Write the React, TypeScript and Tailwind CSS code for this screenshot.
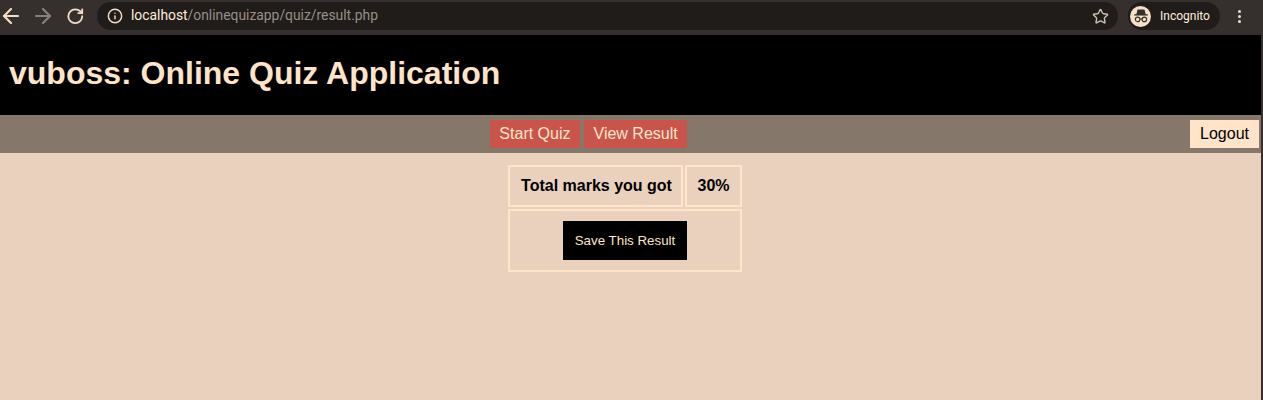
import { ArrowLeft, ArrowRight, RotateCw, Info, Star } from 'lucide-react';

function BrowserBar() {
  return (
    <div className="flex h-[35px] items-center bg-[#35302d] pb-[3px] font-['Roboto',sans-serif]">
      <ArrowLeft className="-ml-[1px] h-[24px] w-[24px] text-[#f3ddc9]" strokeWidth={2.2} />
      <ArrowRight className="ml-[8px] h-[24px] w-[24px] text-[#8a7f76]" strokeWidth={2.2} />
      <RotateCw className="ml-[11px] h-[18.5px] w-[18.5px] text-[#f3ddc9]" strokeWidth={2.4} />
      <div className="ml-[12.5px] flex h-[28px] w-[1021px] items-center rounded-full bg-[#1f1c1a] pl-[10px] pr-[9px]">
        <Info className="h-[16px] w-[16px] text-[#f3ddc9]" strokeWidth={2.2} />
        <div className="ml-[8px] flex-1 text-[13.85px] leading-none text-[#9a8f86]">
          <span className="text-[#fdeedd]">localhost</span>/onlinequizapp/quiz/result.php
        </div>
        <Star className="h-[17px] w-[17px] text-[#cdbdae]" strokeWidth={2} />
      </div>
      <div className="ml-[10px] flex h-[28px] w-[92px] items-center rounded-full bg-[#1f1c1a] pl-[2px]">
        <div className="flex h-[21px] w-[21px] items-center justify-center rounded-full bg-[#f7dfc8]">
          <svg viewBox="0 0 24 24" className="h-[18px] w-[18px]" fill="none" stroke="#35302d" strokeWidth="1.5">
            <path d="M8 4h8l1.5 6h-11z" fill="#35302d" />
            <path d="M3 10.5h18" strokeWidth="1.8" />
            <circle cx="7.5" cy="16.5" r="3" />
            <circle cx="16.5" cy="16.5" r="3" />
            <path d="M10.5 16h3" />
          </svg>
        </div>
        <span className="ml-[9px] text-[12px] text-[#fdeedd]">Incognito</span>
      </div>
      <div className="ml-[18px] flex flex-col gap-[2px]">
        <span className="h-[3px] w-[3px] rounded-full bg-[#f3ddc9]" />
        <span className="h-[3px] w-[3px] rounded-full bg-[#f3ddc9]" />
        <span className="h-[3px] w-[3px] rounded-full bg-[#f3ddc9]" />
      </div>
    </div>
  );
}

export default function App() {
  return (
    <div className="flex h-[400px] flex-col overflow-hidden border-r-2 border-[#35302d] bg-[#e9d1bd] font-['Liberation_Sans',Arial,sans-serif]">
      <BrowserBar />
      <header className="flex h-[80px] items-center bg-black pb-[4px] pl-[9px]">
        <h1 className="text-[32px] font-bold text-[#ffe4c9]">vuboss: Online Quiz Application</h1>
      </header>
      <nav className="flex h-[38px] items-center bg-[#857769] pr-[2px]">
        <div className="flex flex-1 justify-center gap-[4px] pr-[1px]">
          <a className="bg-[#c8544b] px-[9px] py-[5px] text-[16px] leading-[18px] text-[#ffe4c9]">Start Quiz</a>
          <a className="bg-[#c8544b] pl-[10px] pr-[9px] py-[5px] text-[16px] leading-[18px] text-[#ffe4c9]">View Result</a>
        </div>
        <a className="ml-[12px] bg-[#ffe4c9] px-[10px] py-[5px] text-[16px] leading-[18px] text-black">Logout</a>
      </nav>
      <main className="flex justify-center pr-[11px] pt-[10px]">
        <table className="border-separate border-spacing-[2px] text-[16px] font-bold text-black">
          <tbody>
            <tr>
              <td className="h-[42px] w-[175px] border-2 border-[#ffe4c9] pl-[11px] pr-[9px] text-center">Total marks you got</td>
              <td className="h-[42px] w-[57px] border-2 border-[#ffe4c9] px-[10px] text-center">30%</td>
            </tr>
            <tr>
              <td colSpan={2} className="h-[63px] border-2 border-[#ffe4c9] text-center">
                <button className="h-[39px] w-[124px] bg-black text-[13.33px] font-normal text-[#ffe4c9]">Save This Result</button>
              </td>
            </tr>
          </tbody>
        </table>
      </main>
    </div>
  );
}
